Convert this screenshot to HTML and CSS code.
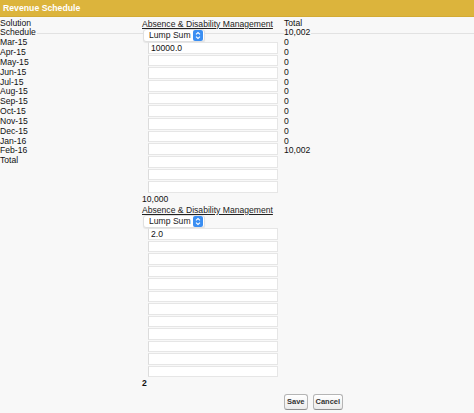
FILE: index.html
```html
<!DOCTYPE html>
<html>
<head>
<meta charset="utf-8">
<link rel="stylesheet" href="styles.css">
</head>
<body>
<div class="header">Revenue Schedule</div>
<div class="content">
  <div class="grid">
    <div class="col labels">
      <div class="line">Solution</div>
      <div class="line"><span class="mask">Schedule</span></div>
      <div class="line">Mar-15</div>
      <div class="line">Apr-15</div>
      <div class="line">May-15</div>
      <div class="line">Jun-15</div>
      <div class="line">Jul-15</div>
      <div class="line">Aug-15</div>
      <div class="line">Sep-15</div>
      <div class="line">Oct-15</div>
      <div class="line">Nov-15</div>
      <div class="line">Dec-15</div>
      <div class="line">Jan-16</div>
      <div class="line">Feb-16</div>
      <div class="line">Total</div>
    </div>
    <div class="col middle">
      <div class="block first">
        <div class="line"><a class="link" href="#">Absence &amp; Disability Management</a></div>
        <div class="select"><span class="sel-text">Lump Sum</span><svg class="sel-arrow" width="10" height="11" viewBox="0 0 10 11"><rect x="0" y="0" width="10" height="11" rx="2" fill="#3a8ef2"/><path d="M3 4.3 L5 2.5 L7 4.3 M3 6.7 L5 8.5 L7 6.7" fill="none" stroke="#fff" stroke-width="1.1"/></svg></div>
        <div class="inputs">
          <input class="cell" value="10000.0">
          <input class="cell"><input class="cell"><input class="cell">
          <input class="cell"><input class="cell"><input class="cell">
          <input class="cell"><input class="cell"><input class="cell">
          <input class="cell"><input class="cell">
        </div>
        <div class="line sum">10,000</div>
      </div>
      <div class="block second">
        <div class="line"><a class="link" href="#">Absence &amp; Disability Management</a></div>
        <div class="select"><span class="sel-text">Lump Sum</span><svg class="sel-arrow" width="10" height="11" viewBox="0 0 10 11"><rect x="0" y="0" width="10" height="11" rx="2" fill="#3a8ef2"/><path d="M3 4.3 L5 2.5 L7 4.3 M3 6.7 L5 8.5 L7 6.7" fill="none" stroke="#fff" stroke-width="1.1"/></svg></div>
        <div class="inputs two">
          <input class="cell" value="2.0">
          <input class="cell"><input class="cell"><input class="cell">
          <input class="cell"><input class="cell"><input class="cell">
          <input class="cell"><input class="cell"><input class="cell">
          <input class="cell"><input class="cell">
        </div>
        <div class="line sum bold">2</div>
      </div>
    </div>
    <div class="col totals">
      <div class="line">Total</div>
      <div class="line"><span class="mask">10,002</span></div>
      <div class="line">0</div>
      <div class="line">0</div>
      <div class="line">0</div>
      <div class="line">0</div>
      <div class="line">0</div>
      <div class="line">0</div>
      <div class="line">0</div>
      <div class="line">0</div>
      <div class="line">0</div>
      <div class="line">0</div>
      <div class="line">0</div>
      <div class="line">10,002</div>
    </div>
  </div>
  <div class="buttons">
    <button class="btn">Save</button>
    <button class="btn">Cancel</button>
  </div>
</div>
</body>
</html>
```
FILE: styles.css
```css
html, body {
  margin: 0;
  padding: 0;
  background: #f8f8f8;
  font-family: "Liberation Sans", Arial, sans-serif;
  font-size: 8.6px;
  color: #111;
}
.header {
  height: 17px;
  line-height: 17px;
  background: #dcb43c;
  color: #fff;
  font-weight: bold;
  font-size: 8.7px;
  padding-left: 3px;
  border-bottom: 1px solid #d3ab34;
  box-sizing: border-box;
}
.content {
  background-image: linear-gradient(#e2e2e2, #e2e2e2);
  background-repeat: no-repeat;
  background-size: 100% 1px;
  background-position: 0 16px;
}
.grid {
  display: grid;
  grid-template-columns: 142px 142px 1fr;
  align-items: start;
  padding-top: 1.5px;
}
.line {
  height: 9.85px;
  line-height: 9.85px;
  white-space: nowrap;
}
.mask { background: #f8f8f8; padding-right: 1px; }
.middle .line { height: 10px; line-height: 10px; }
.link {
  color: #222;
  text-decoration: underline;
}
.select {
  margin-left: 1px;
  width: 62px;
  height: 13px;
  box-sizing: border-box;
  background: #fff;
  border: 1px solid #e0e0e0;
  border-radius: 3px;
  box-shadow: 0 1px 1px rgba(0,0,0,0.08);
  display: flex;
  align-items: center;
  justify-content: space-between;
  padding: 0 1px 0 5px;
  color: #222;
}
.sel-arrow { display: block; }
.inputs {
  margin-left: 6px;
  width: 130px;
  padding-top: 0.5px;
  display: flex;
  flex-direction: column;
}
.cell {
  display: block;
  box-sizing: border-box;
  width: 130px;
  height: 11.67px;
  margin: 0 0 1px 0;
  border: 1px solid #e6e6e6;
  border-left-color: #dcdcdc;
  background: #fff;
  font-family: "Liberation Sans", Arial, sans-serif;
  font-size: 8.6px;
  color: #111;
  padding: 0 0 0 2px;
  outline: none;
}
.inputs.two .cell { height: 11.5px; }
.middle .line.sum { height: 11px; line-height: 11px; }
.bold { font-weight: bold; }
.buttons {
  display: flex;
  gap: 5px;
  padding-left: 284px;
  margin-top: 5px;
}
.btn {
  height: 16px;
  padding: 0 2px;
  font-family: "Liberation Sans", Arial, sans-serif;
  font-size: 7.5px;
  font-weight: bold;
  color: #333;
  background: linear-gradient(#ffffff, #ececec);
  border: 1px solid #b5b5b5;
  border-bottom-color: #8f8f8f;
  border-radius: 3px;
  line-height: 14px;
}
```
